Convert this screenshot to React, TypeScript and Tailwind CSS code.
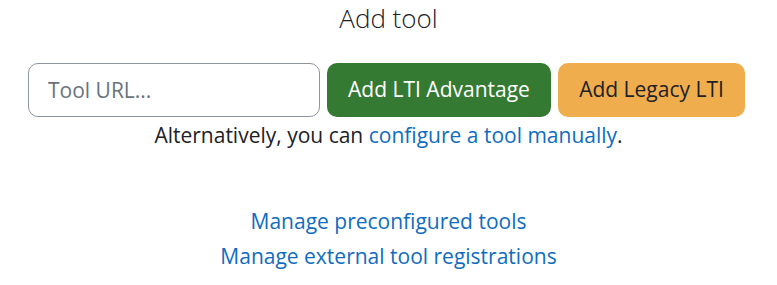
const App = () => {
  return (
    <div className="flex w-[777px] h-[285px] flex-col items-center bg-white font-['Open_Sans',sans-serif] text-[#1d2125]">
      <h2 className="mt-[2px] text-[26px] font-light leading-[32px]">Add tool</h2>
      <div className="mt-[29px] mr-[4px] flex gap-[7px]">
        <input
          type="text"
          placeholder="Tool URL..."
          className="h-[54px] w-[292px] rounded-[10px] border border-[#8f959e] px-[19px] text-[21px] placeholder:text-[#6a737b] outline-none"
        />
        <button className="h-[54px] w-[224px] rounded-[10px] bg-[#357a32] text-[21px] text-white">
          Add LTI Advantage
        </button>
        <button className="h-[54px] w-[187px] rounded-[10px] bg-[#f0ad4e] text-[21px] text-[#1d2125]">
          Add Legacy LTI
        </button>
      </div>
      <p className="mt-[4px] text-[21px] leading-[28px]">
        Alternatively, you can <a className="text-[#0f6cbf]">configure a tool manually</a>.
      </p>
      <div className="mt-[55px] flex flex-col items-center text-[21px] leading-[35px] text-[#0f6cbf]">
        <a>Manage preconfigured tools</a>
        <a>Manage external tool registrations</a>
      </div>
    </div>
  );
};

export default App;
